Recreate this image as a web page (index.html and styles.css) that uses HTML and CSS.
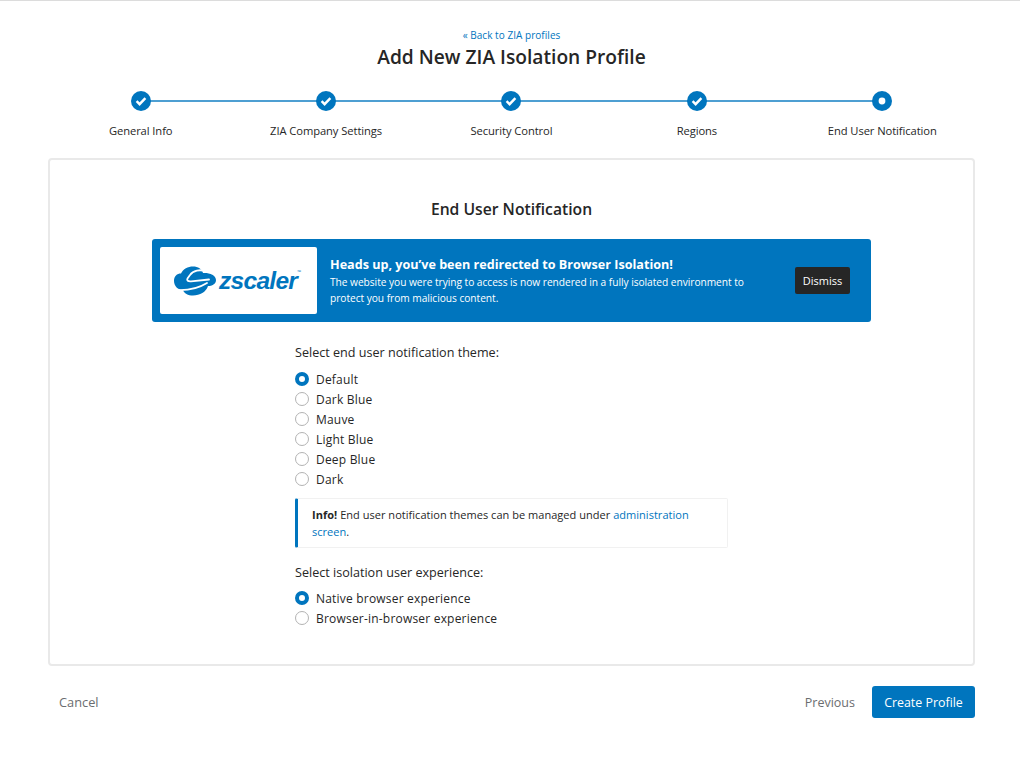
FILE: index.html
```html
<!DOCTYPE html>
<html lang="en">
<head>
<meta charset="utf-8">
<title>Add New ZIA Isolation Profile</title>
<link rel="stylesheet" href="styles.css">
</head>
<body>
<main class="page">
  <header class="head">
    <a class="back" href="#">« Back to ZIA profiles</a>
    <h1 class="title">Add New ZIA Isolation Profile</h1>
  </header>
  <ol class="steps">
    <li class="step"><span class="dot"><svg viewBox="0 0 20 20" width="20" height="20"><path class="tick" d="M5.6 10.2l3 3 5.8-6"/></svg></span><span class="step-label">General Info</span></li>
    <li class="step"><span class="dot"><svg viewBox="0 0 20 20" width="20" height="20"><path class="tick" d="M5.6 10.2l3 3 5.8-6"/></svg></span><span class="step-label">ZIA Company Settings</span></li>
    <li class="step"><span class="dot"><svg viewBox="0 0 20 20" width="20" height="20"><path class="tick" d="M5.6 10.2l3 3 5.8-6"/></svg></span><span class="step-label">Security Control</span></li>
    <li class="step"><span class="dot"><svg viewBox="0 0 20 20" width="20" height="20"><path class="tick" d="M5.6 10.2l3 3 5.8-6"/></svg></span><span class="step-label">Regions</span></li>
    <li class="step"><span class="dot"><svg viewBox="0 0 20 20" width="20" height="20"><circle cx="10" cy="10" r="3.4" fill="#fff"/></svg></span><span class="step-label">End User Notification</span></li>
  </ol>
  <section class="card">
    <h2 class="card-title">End User Notification</h2>
    <div class="banner">
      <div class="logo">
        <svg class="cloud" viewBox="0 0 44 30" width="44" height="30">
          <path fill="#0075be" d="M1 15C1 10 4 7.500 8 7.500 10 3 15 .5 20 .5 25 .5 29 3 30 7c6-.5 13 2 13 7 0 4-4 6-8 6-2 6-8 9.500-15 9.500-5 0-9-2-10-5.500C5 24 1 20 1 15z"/>
          <path class="swoosh" d="M33 5.500c-6-2.500-13-1-16 3.500l-2.500 3.500c-1 2 .5 3 3.500 2.800l18-1.800"/>
          <path class="swoosh" d="M4 24c11 .5 22-2 30-7"/>
        </svg>
        <span class="wordmark">zscaler</span><span class="tm">™</span>
      </div>
      <div class="banner-text">
        <strong class="banner-title">Heads up, you’ve been redirected to Browser Isolation!</strong>
        <p class="banner-body">The website you were trying to access is now rendered in a fully isolated environment to protect you from malicious content.</p>
      </div>
      <button class="dismiss" type="button">Dismiss</button>
    </div>
    <form class="options">
      <p class="group-label">Select end user notification theme:</p>
      <div class="radios">
        <label class="radio"><input type="radio" name="theme" checked><span class="mark"></span>Default</label>
        <label class="radio"><input type="radio" name="theme"><span class="mark"></span>Dark Blue</label>
        <label class="radio"><input type="radio" name="theme"><span class="mark"></span>Mauve</label>
        <label class="radio"><input type="radio" name="theme"><span class="mark"></span>Light Blue</label>
        <label class="radio"><input type="radio" name="theme"><span class="mark"></span>Deep Blue</label>
        <label class="radio"><input type="radio" name="theme"><span class="mark"></span>Dark</label>
      </div>
      <div class="info"><b>Info!</b> End user notification themes can be managed under <a href="#">administration screen</a>.</div>
      <p class="group-label">Select isolation user experience:</p>
      <div class="radios">
        <label class="radio"><input type="radio" name="exp" checked><span class="mark"></span>Native browser experience</label>
        <label class="radio"><input type="radio" name="exp"><span class="mark"></span>Browser-in-browser experience</label>
      </div>
    </form>
  </section>
  <footer class="actions">
    <a class="cancel" href="#">Cancel</a>
    <div class="actions-right">
      <a class="previous" href="#">Previous</a>
      <button class="create" type="button">Create Profile</button>
    </div>
  </footer>
</main>
</body>
</html>
```
FILE: styles.css
```css
* { box-sizing: border-box; }
html, body { margin: 0; padding: 0; }
body {
  font-family: "Open Sans", "Liberation Sans", sans-serif;
  color: #262626;
  background: #fff;
  border-top: 1px solid #dcdcdc;
  font-size: 12px;
}
.page { width: 927px; margin-left: 48px; }
.head { display: flex; flex-direction: column; align-items: center; padding-top: 27px; }
.back { font-size: 10px; line-height: 14px; color: #0075be; text-decoration: none; letter-spacing: .04px; }
.title { margin: 1px 0 0; font-size: 19.2px; line-height: 28px; font-weight: 600; color: #262626; }
.steps { list-style: none; margin: 20px 0 0; padding: 0; display: grid; grid-template-columns: repeat(5, 1fr); }
.step { position: relative; display: flex; flex-direction: column; align-items: center; }
.step::after {
  content: ""; position: absolute; top: 9px; left: 50%; width: 100%; height: 2px; background: #4d9fd2;
}
.step:last-child::after { display: none; }
.dot { position: relative; z-index: 1; width: 20px; height: 20px; border-radius: 50%; background: #0075be; display: block; }
.dot svg { display: block; }
.tick { fill: none; stroke: #fff; stroke-width: 2.4; }
.step-label { margin-top: 12px; font-size: 11.2px; line-height: 15px; color: #262626; letter-spacing: -.08px; white-space: nowrap; }
.card {
  margin-top: 20px; height: 508px; border: 2px solid #e9e9e9; border-radius: 4px;
  padding-top: 38px; display: flex; flex-direction: column; align-items: center;
}
.card-title { margin: 0; font-size: 15.7px; line-height: 22px; font-weight: 600; color: #262626; }
.banner {
  margin-top: 19px; width: 719px; height: 83px; background: #0075be; border-radius: 3px;
  display: flex; align-items: center; padding: 8px 21px 8px 8px; color: #fff;
}
.logo {
  flex: none; width: 157px; height: 67px; background: #fff; border-radius: 2px;
  display: flex; align-items: center; padding-left: 13px; color: #0075be;
}
.cloud { flex: none; margin-right: 2px; }
.swoosh { fill: none; stroke: #fff; stroke-width: 1.8; stroke-linecap: round; }
.wordmark { font-family: "Liberation Sans", sans-serif; font-size: 24.5px; line-height: 30px; font-weight: 700; font-style: italic; letter-spacing: -.7px; color: #0075be; }
.tm { font-size: 5px; align-self: flex-start; margin-top: 22px; }
.banner-text { flex: 1; margin-left: 14px; min-width: 0; }
.banner-title { display: block; margin-left: -1px; font-size: 12.6px; line-height: 17px; font-weight: 700; }
.banner-body { margin: 1px 0 0 -1px; width: 425px; font-size: 10.2px; line-height: 16px; letter-spacing: -.04px; }
.dismiss {
  flex: none; width: 55px; height: 27px; padding: 0; border: 0; border-radius: 2px; background: #262626;
  color: #fff; font: 11px "Open Sans", sans-serif;
}
.options { width: 433px; margin-top: 21px; }
.group-label { margin: 0; font-size: 12.6px; line-height: 20px; color: #262626; }
.radios { margin-top: 6px; display: flex; flex-direction: column; }
.radio { display: flex; align-items: center; height: 20px; font-size: 12px; letter-spacing: .2px; color: #262626; }
.radio input { position: absolute; opacity: 0; width: 0; height: 0; margin: 0; }
.mark {
  flex: none; width: 14px; height: 14px; border-radius: 50%; border: 1px solid #b3b3b3; background: #fff; margin-right: 7px;
}
.radio input:checked + .mark { border: 4px solid #0075be; }
.info {
  margin-top: 9px; height: 50px; padding: 7px 20px 0 14px; border: 1px solid #f1f1f1; border-left: 3px solid #0075be;
  border-radius: 2px; font-size: 11px; letter-spacing: .03px; line-height: 17px; color: #262626;
}
.info b { font-weight: 700; }
.info a { color: #0075be; text-decoration: none; }
.info + .group-label { margin-top: 15px; }
.info + .group-label + .radios { margin-top: 5px; }
.actions { margin-top: 20px; display: flex; justify-content: space-between; align-items: center; height: 32px; }
.cancel { margin-left: 11px; font-size: 12.8px; color: #6b6d70; text-decoration: none; }
.actions-right { display: flex; align-items: center; gap: 17px; }
.previous { font-size: 12.5px; color: #6b6d70; text-decoration: none; }
.create {
  width: 103px; height: 32px; padding: 0; border: 0; border-radius: 3px; background: #0075be; color: #fff;
  font: 12.4px "Open Sans", sans-serif;
}
```
